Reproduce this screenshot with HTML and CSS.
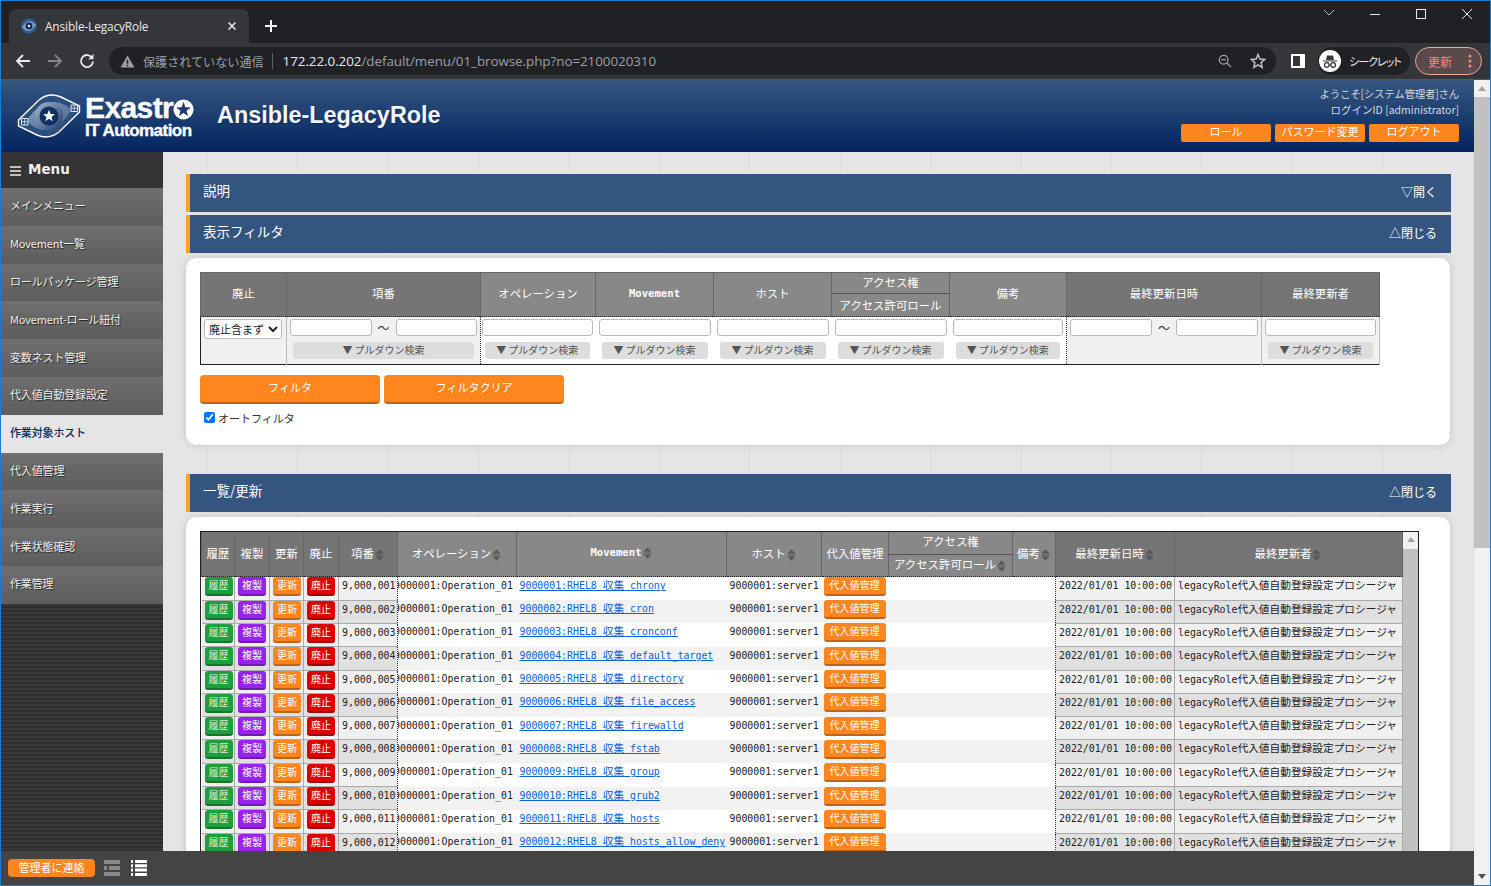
FILE: index.html
```html
<!DOCTYPE html>
<html lang="ja">
<head>
<meta charset="utf-8">
<title>Ansible-LegacyRole</title>
<link rel="stylesheet" href="styles.css">
</head>
<body>
<svg class="defs" width="0" height="0" aria-hidden="true">
  <symbol id="sort" viewBox="0 0 10 12"><path d="M5 0.5 L9 4.5 H1 Z M1 5.5 H9 V6.5 H1 Z M1 7.5 H9 L5 11.5 Z" fill="#555"/></symbol>
</svg>
<div class="window">
  <div class="tabstrip">
    <div class="tab">
      <svg class="favicon" viewBox="0 0 16 16"><circle cx="8" cy="8" r="7.8" fill="#2f5c8f"/><path d="M1 9 Q5 3 9 3 Q13 4 15 7 Q11 13 7 13 Q3 12 1 9 Z" fill="#7f9abb"/><circle cx="8" cy="8" r="3.4" fill="#12305c"/><circle cx="8" cy="8" r="1.2" fill="#fff"/></svg>
      <span class="tab-title">Ansible-LegacyRole</span>
      <svg class="tab-close" viewBox="0 0 10 10"><path d="M1.5 1.5 L8.5 8.5 M8.5 1.5 L1.5 8.5" stroke="#e8eaed" stroke-width="1.5"/></svg>
    </div>
    <svg class="newtab" viewBox="0 0 14 14"><path d="M7 1 V13 M1 7 H13" stroke="#fff" stroke-width="2"/></svg>
    <div class="winctl">
      <svg class="w-ic" viewBox="0 0 46 16"><path d="M18 4 L23 9 L28 4" fill="none" stroke="#bbb" stroke-width="1"/></svg>
      <svg class="w-ic" viewBox="0 0 46 16"><path d="M18 8.5 H28" stroke="#eee" stroke-width="1"/></svg>
      <svg class="w-ic" viewBox="0 0 46 16"><rect x="18.5" y="3.5" width="9" height="9" fill="none" stroke="#eee" stroke-width="1"/></svg>
      <svg class="w-ic" viewBox="0 0 46 16"><path d="M18 3 L28 13 M28 3 L18 13" stroke="#eee" stroke-width="1"/></svg>
    </div>
  </div>
  <div class="toolbar">
    <svg class="nav-ic" viewBox="0 0 16 16"><path d="M15 8 H2 M8 2 L2 8 L8 14" fill="none" stroke="#e8eaed" stroke-width="1.8"/></svg>
    <svg class="nav-ic" viewBox="0 0 16 16"><path d="M1 8 H14 M8 2 L14 8 L8 14" fill="none" stroke="#80868b" stroke-width="1.8"/></svg>
    <svg class="nav-ic" viewBox="0 0 16 16"><path d="M13.2 5 A6 6 0 1 0 14 8.5" fill="none" stroke="#e8eaed" stroke-width="1.8"/><path d="M14.5 1 V6.3 H9.2 Z" fill="#e8eaed"/></svg>
    <div class="omnibox">
      <svg class="warn" viewBox="0 0 16 14"><path d="M8 0.5 L15.5 13.5 H0.5 Z" fill="#9aa0a6"/><path d="M7.2 5 H8.8 V9.5 H7.2 Z M7.2 10.5 H8.8 V12 H7.2 Z" fill="#202124"/></svg>
      <span class="insecure">保護されていない通信</span>
      <span class="omni-sep"></span>
      <span class="url"><b class="host">172.22.0.202</b>/default/menu/01_browse.php?no=2100020310</span>
      <svg class="omni-zoom" viewBox="0 0 16 16"><circle cx="6.5" cy="6.5" r="5" fill="none" stroke="#9aa0a6" stroke-width="1.5"/><path d="M10.2 10.2 L15 15 M4 6.5 H9" stroke="#9aa0a6" stroke-width="1.5"/></svg>
      <svg class="omni-star" viewBox="0 0 16 16"><path d="M8 1.5 L9.9 6 L14.8 6.4 L11.1 9.6 L12.2 14.4 L8 11.9 L3.8 14.4 L4.9 9.6 L1.2 6.4 L6.1 6 Z" fill="none" stroke="#bdc1c6" stroke-width="1.5"/></svg>
    </div>
    <svg class="panel-ic" viewBox="0 0 14 14"><rect width="14" height="14" fill="#fff"/><rect x="2" y="2" width="7" height="10" fill="#35363a"/></svg>
    <div class="incog">
      <svg class="incog-ic" viewBox="0 0 22 22"><circle cx="11" cy="11" r="11" fill="#fff"/><path d="M4 10.5 H18 V11.5 H4 Z M7 10 L8 5.5 H14 L15 10 Z" fill="#35363a"/><circle cx="7.8" cy="15" r="2.3" fill="none" stroke="#35363a" stroke-width="1.2"/><circle cx="14.2" cy="15" r="2.3" fill="none" stroke="#35363a" stroke-width="1.2"/><path d="M10 15 H12" stroke="#35363a" stroke-width="1.2"/></svg>
      <span class="incog-label">シークレット</span>
    </div>
    <div class="update">
      <span class="update-label">更新</span>
      <svg class="update-dots" viewBox="0 0 4 14"><circle cx="2" cy="2" r="1.5" fill="#f28b82"/><circle cx="2" cy="7" r="1.5" fill="#f28b82"/><circle cx="2" cy="12" r="1.5" fill="#f28b82"/></svg>
    </div>
  </div>
  <div class="viewport">
    <div class="page">
      <header class="site-head">
        <div class="logo">
          <svg class="logo-mark" viewBox="0 0 64 46">
            <defs>
              <linearGradient id="ring" x1="0" y1="0" x2="1" y2="1"><stop offset="0" stop-color="#aab9cd"/><stop offset="1" stop-color="#1b3d6e"/></linearGradient>
              <linearGradient id="lens" x1="0" y1="0" x2="1" y2="1"><stop offset="0" stop-color="#8fa4c0"/><stop offset="1" stop-color="#3d5f8f"/></linearGradient>
            </defs>
            <path d="M1.5 27 L22 7 Q32 -1 44 4 L62.5 13 V19 L42 39 Q32 47 20 42 L1.5 33 Z" fill="#2d4f80" stroke="#fff" stroke-width="1.4"/>
            <path d="M10 27 Q22 9 38 9 Q50 11 54 17 Q44 36 26 37 Q15 35 10 27 Z" fill="url(#lens)"/>
            <circle cx="32" cy="23" r="14" fill="url(#ring)"/>
            <circle cx="32" cy="23" r="9.5" fill="#10305f"/>
            <path d="M32 16.8 L33.6 21 L38 21.2 L34.5 23.9 L35.7 28.2 L32 25.7 L28.3 28.2 L29.5 23.9 L26 21.2 L30.4 21 Z" fill="#fff"/>
            <path d="M4.5 25.5 H11 V32 H4.5 Z M54 12 H60.5 V18.5 H54 Z" fill="#2c4d7c" stroke="#dfe6ef" stroke-width="1"/>
            <path d="M7.7 25.5 V32 M4.5 28.7 H11 M57.2 12 V18.5 M54 15.2 H60.5" stroke="#dfe6ef" stroke-width="0.8"/>
          </svg>
          <div class="logo-text">
            <div class="logo-name">Exastr<svg class="logo-o" viewBox="0 0 22 22"><circle cx="11" cy="11" r="10.5" fill="#fff"/><path d="M11 3.2 L13 8.6 L18.8 8.8 L14.2 12.3 L15.8 17.9 L11 14.7 L6.2 17.9 L7.8 12.3 L3.2 8.8 L9 8.6 Z" fill="#1c3d6e"/></svg></div>
            <div class="logo-sub">IT Automation</div>
          </div>
        </div>
        <h1 class="page-title">Ansible-LegacyRole</h1>
        <div class="user-box">
          <div class="user-line welcome">ようこそ[システム管理者]さん</div>
          <div class="user-line">ログインID [administrator]</div>
          <div class="user-btns">
            <span class="head-btn">ロール</span>
            <span class="head-btn">パスワード変更</span>
            <span class="head-btn">ログアウト</span>
          </div>
        </div>
      </header>
      <div class="body-row">
        <nav class="sidebar">
          <div class="menu-head">
            <svg class="burger" viewBox="0 0 11 10"><path d="M0 1 H11 M0 5 H11 M0 9 H11" stroke="#eee" stroke-width="1.6"/></svg>
            <span>Menu</span>
          </div>
          <a class="menu-item">メインメニュー</a>
          <a class="menu-item">Movement一覧</a>
          <a class="menu-item">ロールパッケージ管理</a>
          <a class="menu-item">Movement-ロール紐付</a>
          <a class="menu-item">変数ネスト管理</a>
          <a class="menu-item">代入値自動登録設定</a>
          <a class="menu-item active">作業対象ホスト</a>
          <a class="menu-item">代入値管理</a>
          <a class="menu-item">作業実行</a>
          <a class="menu-item">作業状態確認</a>
          <a class="menu-item">作業管理</a>
          <div class="menu-rest"></div>
        </nav>
        <main class="content">
          <div class="bar bar-first"><span>説明</span><span class="bar-toggle">▽開く</span></div>
          <div class="bar bar-filter"><span>表示フィルタ</span><span class="bar-toggle">△閉じる</span></div>
          <section class="card filter-card">
            <table class="ftable">
              <colgroup><col class="fc1"><col class="fc2"><col class="fc3"><col class="fc4"><col class="fc5"><col class="fc6"><col class="fc7"><col class="fc8"><col class="fc9"></colgroup>
              <thead>
                <tr>
                  <th rowspan="2" class="dark">廃止</th>
                  <th rowspan="2" class="dark dotr">項番</th>
                  <th rowspan="2">オペレーション</th>
                  <th rowspan="2" class="mono">Movement</th>
                  <th rowspan="2">ホスト</th>
                  <th class="sub">アクセス権</th>
                  <th rowspan="2" class="dotr">備考</th>
                  <th rowspan="2" class="dark">最終更新日時</th>
                  <th rowspan="2" class="dark">最終更新者</th>
                </tr>
                <tr><th class="sub">アクセス許可ロール</th></tr>
              </thead>
              <tbody>
                <tr>
                  <td class="fixed"><select class="sel"><option>廃止含まず</option></select></td>
                  <td class="fixed dotr"><div class="range"><span class="inp"></span><span class="tilde">～</span><span class="inp"></span></div><div class="pull">▼ プルダウン検索</div></td>
                  <td class="tight"><span class="inp"></span><div class="pull">▼ プルダウン検索</div></td>
                  <td><span class="inp"></span><div class="pull">▼ プルダウン検索</div></td>
                  <td><span class="inp"></span><div class="pull">▼ プルダウン検索</div></td>
                  <td><span class="inp"></span><div class="pull">▼ プルダウン検索</div></td>
                  <td class="dotr"><span class="inp"></span><div class="pull">▼ プルダウン検索</div></td>
                  <td class="fixed"><div class="range"><span class="inp"></span><span class="tilde">～</span><span class="inp"></span></div></td>
                  <td class="fixed"><span class="inp"></span><div class="pull">▼ プルダウン検索</div></td>
                </tr>
              </tbody>
            </table>
            <div class="filter-actions">
              <span class="act-btn">フィルタ</span>
              <span class="act-btn">フィルタクリア</span>
            </div>
            <label class="auto"><input type="checkbox" class="auto-check" checked>オートフィルタ</label>
          </section>
          <div class="bar bar-list"><span>一覧/更新</span><span class="bar-toggle">△閉じる</span></div>
          <section class="card list-card">
            <div class="list-wrap">
              <table class="ltable">
                <colgroup><col class="lc1"><col class="lc2"><col class="lc3"><col class="lc4"><col class="lc5"><col class="lc6"><col class="lc7"><col class="lc8"><col class="lc9"><col class="lc10"><col class="lc11"><col class="lc12"><col class="lc13"></colgroup>
                <thead>
                  <tr>
                    <th rowspan="2" class="dark">履歴</th>
                    <th rowspan="2" class="dark">複製</th>
                    <th rowspan="2" class="dark">更新</th>
                    <th rowspan="2" class="dark">廃止</th>
                    <th rowspan="2" class="dark dotr">項番<svg class="sorti"><use href="#sort"/></svg></th>
                    <th rowspan="2">オペレーション<svg class="sorti"><use href="#sort"/></svg></th>
                    <th rowspan="2" class="mono">Movement<svg class="sorti"><use href="#sort"/></svg></th>
                    <th rowspan="2">ホスト<svg class="sorti"><use href="#sort"/></svg></th>
                    <th rowspan="2">代入値管理</th>
                    <th class="sub">アクセス権</th>
                    <th rowspan="2" class="dotr">備考<svg class="sorti"><use href="#sort"/></svg></th>
                    <th rowspan="2" class="dark">最終更新日時<svg class="sorti"><use href="#sort"/></svg></th>
                    <th rowspan="2" class="dark">最終更新者<svg class="sorti"><use href="#sort"/></svg></th>
                  </tr>
                  <tr><th class="sub">アクセス許可ロール<svg class="sorti"><use href="#sort"/></svg></th></tr>
                </thead>
                <tbody>
                  <tr><td class="fx"><span class="b g">履歴</span></td><td class="fx"><span class="b p">複製</span></td><td class="fx"><span class="b o">更新</span></td><td class="fx"><span class="b r">廃止</span></td><td class="fx num dotr">9,000,001</td><td class="op"><span class="opt">9000001:Operation_01</span></td><td><a class="lnk">9000001:RHEL8 <span class="ja">収集</span> chrony</a></td><td>9000001:server1</td><td><span class="b o wide">代入値管理</span></td><td></td><td class="dotr"></td><td class="fx num">2022/01/01 10:00:00</td><td class="fx who">legacyRole<span class="ja">代入値自動登録設定プロシージャ</span></td></tr>
                  <tr><td class="fx"><span class="b g">履歴</span></td><td class="fx"><span class="b p">複製</span></td><td class="fx"><span class="b o">更新</span></td><td class="fx"><span class="b r">廃止</span></td><td class="fx num dotr">9,000,002</td><td class="op"><span class="opt">9000001:Operation_01</span></td><td><a class="lnk">9000002:RHEL8 <span class="ja">収集</span> cron</a></td><td>9000001:server1</td><td><span class="b o wide">代入値管理</span></td><td></td><td class="dotr"></td><td class="fx num">2022/01/01 10:00:00</td><td class="fx who">legacyRole<span class="ja">代入値自動登録設定プロシージャ</span></td></tr>
                  <tr><td class="fx"><span class="b g">履歴</span></td><td class="fx"><span class="b p">複製</span></td><td class="fx"><span class="b o">更新</span></td><td class="fx"><span class="b r">廃止</span></td><td class="fx num dotr">9,000,003</td><td class="op"><span class="opt">9000001:Operation_01</span></td><td><a class="lnk">9000003:RHEL8 <span class="ja">収集</span> cronconf</a></td><td>9000001:server1</td><td><span class="b o wide">代入値管理</span></td><td></td><td class="dotr"></td><td class="fx num">2022/01/01 10:00:00</td><td class="fx who">legacyRole<span class="ja">代入値自動登録設定プロシージャ</span></td></tr>
                  <tr><td class="fx"><span class="b g">履歴</span></td><td class="fx"><span class="b p">複製</span></td><td class="fx"><span class="b o">更新</span></td><td class="fx"><span class="b r">廃止</span></td><td class="fx num dotr">9,000,004</td><td class="op"><span class="opt">9000001:Operation_01</span></td><td><a class="lnk">9000004:RHEL8 <span class="ja">収集</span> default_target</a></td><td>9000001:server1</td><td><span class="b o wide">代入値管理</span></td><td></td><td class="dotr"></td><td class="fx num">2022/01/01 10:00:00</td><td class="fx who">legacyRole<span class="ja">代入値自動登録設定プロシージャ</span></td></tr>
                  <tr><td class="fx"><span class="b g">履歴</span></td><td class="fx"><span class="b p">複製</span></td><td class="fx"><span class="b o">更新</span></td><td class="fx"><span class="b r">廃止</span></td><td class="fx num dotr">9,000,005</td><td class="op"><span class="opt">9000001:Operation_01</span></td><td><a class="lnk">9000005:RHEL8 <span class="ja">収集</span> directory</a></td><td>9000001:server1</td><td><span class="b o wide">代入値管理</span></td><td></td><td class="dotr"></td><td class="fx num">2022/01/01 10:00:00</td><td class="fx who">legacyRole<span class="ja">代入値自動登録設定プロシージャ</span></td></tr>
                  <tr><td class="fx"><span class="b g">履歴</span></td><td class="fx"><span class="b p">複製</span></td><td class="fx"><span class="b o">更新</span></td><td class="fx"><span class="b r">廃止</span></td><td class="fx num dotr">9,000,006</td><td class="op"><span class="opt">9000001:Operation_01</span></td><td><a class="lnk">9000006:RHEL8 <span class="ja">収集</span> file_access</a></td><td>9000001:server1</td><td><span class="b o wide">代入値管理</span></td><td></td><td class="dotr"></td><td class="fx num">2022/01/01 10:00:00</td><td class="fx who">legacyRole<span class="ja">代入値自動登録設定プロシージャ</span></td></tr>
                  <tr><td class="fx"><span class="b g">履歴</span></td><td class="fx"><span class="b p">複製</span></td><td class="fx"><span class="b o">更新</span></td><td class="fx"><span class="b r">廃止</span></td><td class="fx num dotr">9,000,007</td><td class="op"><span class="opt">9000001:Operation_01</span></td><td><a class="lnk">9000007:RHEL8 <span class="ja">収集</span> firewalld</a></td><td>9000001:server1</td><td><span class="b o wide">代入値管理</span></td><td></td><td class="dotr"></td><td class="fx num">2022/01/01 10:00:00</td><td class="fx who">legacyRole<span class="ja">代入値自動登録設定プロシージャ</span></td></tr>
                  <tr><td class="fx"><span class="b g">履歴</span></td><td class="fx"><span class="b p">複製</span></td><td class="fx"><span class="b o">更新</span></td><td class="fx"><span class="b r">廃止</span></td><td class="fx num dotr">9,000,008</td><td class="op"><span class="opt">9000001:Operation_01</span></td><td><a class="lnk">9000008:RHEL8 <span class="ja">収集</span> fstab</a></td><td>9000001:server1</td><td><span class="b o wide">代入値管理</span></td><td></td><td class="dotr"></td><td class="fx num">2022/01/01 10:00:00</td><td class="fx who">legacyRole<span class="ja">代入値自動登録設定プロシージャ</span></td></tr>
                  <tr><td class="fx"><span class="b g">履歴</span></td><td class="fx"><span class="b p">複製</span></td><td class="fx"><span class="b o">更新</span></td><td class="fx"><span class="b r">廃止</span></td><td class="fx num dotr">9,000,009</td><td class="op"><span class="opt">9000001:Operation_01</span></td><td><a class="lnk">9000009:RHEL8 <span class="ja">収集</span> group</a></td><td>9000001:server1</td><td><span class="b o wide">代入値管理</span></td><td></td><td class="dotr"></td><td class="fx num">2022/01/01 10:00:00</td><td class="fx who">legacyRole<span class="ja">代入値自動登録設定プロシージャ</span></td></tr>
                  <tr><td class="fx"><span class="b g">履歴</span></td><td class="fx"><span class="b p">複製</span></td><td class="fx"><span class="b o">更新</span></td><td class="fx"><span class="b r">廃止</span></td><td class="fx num dotr">9,000,010</td><td class="op"><span class="opt">9000001:Operation_01</span></td><td><a class="lnk">9000010:RHEL8 <span class="ja">収集</span> grub2</a></td><td>9000001:server1</td><td><span class="b o wide">代入値管理</span></td><td></td><td class="dotr"></td><td class="fx num">2022/01/01 10:00:00</td><td class="fx who">legacyRole<span class="ja">代入値自動登録設定プロシージャ</span></td></tr>
                  <tr><td class="fx"><span class="b g">履歴</span></td><td class="fx"><span class="b p">複製</span></td><td class="fx"><span class="b o">更新</span></td><td class="fx"><span class="b r">廃止</span></td><td class="fx num dotr">9,000,011</td><td class="op"><span class="opt">9000001:Operation_01</span></td><td><a class="lnk">9000011:RHEL8 <span class="ja">収集</span> hosts</a></td><td>9000001:server1</td><td><span class="b o wide">代入値管理</span></td><td></td><td class="dotr"></td><td class="fx num">2022/01/01 10:00:00</td><td class="fx who">legacyRole<span class="ja">代入値自動登録設定プロシージャ</span></td></tr>
                  <tr><td class="fx"><span class="b g">履歴</span></td><td class="fx"><span class="b p">複製</span></td><td class="fx"><span class="b o">更新</span></td><td class="fx"><span class="b r">廃止</span></td><td class="fx num dotr">9,000,012</td><td class="op"><span class="opt">9000001:Operation_01</span></td><td><a class="lnk">9000012:RHEL8 <span class="ja">収集</span> hosts_allow_deny</a></td><td>9000001:server1</td><td><span class="b o wide">代入値管理</span></td><td></td><td class="dotr"></td><td class="fx num">2022/01/01 10:00:00</td><td class="fx who">legacyRole<span class="ja">代入値自動登録設定プロシージャ</span></td></tr>
                </tbody>
              </table>
              <div class="inner-scroll"><div class="inner-up"></div><div class="inner-thumb"></div></div>
            </div>
          </section>
        </main>
      </div>
      <footer class="site-foot">
        <span class="contact">管理者に連絡</span>
        <svg class="foot-ic" viewBox="0 0 16 16"><path d="M0 0 H16 V4 H0 Z M0 6 H3 V10 H0 Z M5 6 H16 V10 H5 Z M0 12 H16 V16 H0 Z" fill="#888"/></svg>
        <svg class="foot-ic" viewBox="0 0 16 16"><path d="M0 0 H2 V3 H0 Z M4 0 H16 V3 H4 Z M0 4.3 H2 V7.3 H0 Z M4 4.3 H16 V7.3 H4 Z M0 8.6 H2 V11.6 H0 Z M4 8.6 H16 V11.6 H4 Z M0 13 H2 V16 H0 Z M4 13 H16 V16 H4 Z" fill="#fff"/></svg>
      </footer>
    </div>
    <div class="page-scroll">
      <div class="arrow-up"></div>
      <div class="page-thumb"></div>
      <div class="arrow-down"></div>
    </div>
  </div>
</div>
</body>
</html>
```
FILE: styles.css
```css
* { box-sizing: border-box; }
html, body { margin: 0; padding: 0; height: 100%; overflow: hidden; }
body { font-family: "Noto Sans CJK JP", "Noto Sans", sans-serif; font-size: 12px; color: #222; background: #202124; }
.defs { position: absolute; }

.window { height: 886px; display: flex; flex-direction: column; border: 1px solid #1a7fd0; overflow: hidden; }

/* browser chrome */
.tabstrip { height: 42px; flex: none; background: #202124; display: flex; align-items: flex-end; padding-left: 8px; }
.tab { width: 240px; height: 34px; background: #35363a; border-radius: 8px 8px 0 0; display: flex; align-items: center; padding: 0 12px; }
.favicon { width: 16px; height: 16px; flex: none; }
.tab-title { margin-left: 8px; font-family: "Open Sans", sans-serif; font-size: 11.8px; color: #e8eaed; letter-spacing: -0.1px; flex: 1; }
.tab-close { width: 10px; height: 10px; flex: none; margin-right: 0; }
.newtab { width: 14px; height: 14px; margin: 0 0 10px 15px; }
.winctl { margin-left: auto; align-self: flex-start; display: flex; padding-top: 5px; }
.w-ic { width: 46px; height: 16px; display: block; }

.toolbar { height: 37px; flex: none; background: #35363a; display: flex; align-items: center; padding: 0 8px 0 14px; border-bottom: 1px solid #555; }
.nav-ic { width: 16px; height: 16px; flex: none; margin-right: 16px; }
.omnibox { width: 1167px; height: 28px; margin-left: -2px; flex: none; background: #202124; border-radius: 14px; display: flex; align-items: center; padding-left: 11px; }
.warn { width: 15px; height: 13px; flex: none; }
.insecure { margin-left: 8px; font-size: 12.1px; color: #9aa0a6; white-space: nowrap; }
.omni-sep { width: 1px; height: 16px; background: #5f6368; margin: 0 10px 0 8px; }
.url { font-family: "Open Sans", sans-serif; font-size: 13.4px; color: #9aa0a6; white-space: nowrap; flex: 1; letter-spacing: -0.05px; }
.host { font-weight: 400; color: #e8eaed; }
.omni-zoom { width: 14px; height: 14px; margin-right: 18px; flex: none; }
.omni-star { width: 16px; height: 16px; margin-right: 10px; flex: none; }
.panel-ic { width: 14px; height: 14px; margin-left: 15px; flex: none; }
.incog { width: 92px; height: 28px; margin-left: 13px; background: #202124; border-radius: 14px; display: flex; align-items: center; padding-left: 1px; flex: none; }
.incog-ic { width: 22px; height: 22px; flex: none; }
.incog-label { margin-left: 8px; font-size: 11px; color: #e8eaed; font-feature-settings: "palt"; letter-spacing: -0.95px; white-space: nowrap; }
.update { width: 67px; height: 28px; margin-left: 5px; border: 1px solid #e8a59a; border-radius: 14px; background: #5a4a4b; display: flex; align-items: center; padding-left: 12px; flex: none; }
.update-label { font-size: 12px; color: #f28b82; }
.update-dots { width: 4px; height: 14px; margin-left: 16px; }

/* page frame */
.viewport { flex: 1; min-height: 0; display: flex; }
.page { flex: 1; min-width: 0; display: flex; flex-direction: column; }

.site-head { height: 72px; flex: none; background: linear-gradient(#36577f, #032460); display: flex; align-items: flex-start; padding: 0 15px 0 16px; color: #fff; }
.logo { display: flex; align-items: flex-start; padding-top: 13px; width: 200px; flex: none; }
.logo-mark { width: 64px; height: 46px; flex: none; }
.logo-text { margin-left: 4px; font-family: "Liberation Sans", sans-serif; font-weight: 700; color: #fff; -webkit-text-stroke: 0.35px #fff; }
.logo-name { font-size: 30px; line-height: 27px; letter-spacing: -0.6px; display: flex; align-items: center; margin-top: 1px; }
.logo-o { width: 21px; height: 21px; margin-left: 0; flex: none; margin-top: 3px; }
.logo-sub { font-size: 17px; line-height: 17px; letter-spacing: -0.55px; margin-top: 1px; }
.page-title { margin: 20px 0 0 0; font-family: "Liberation Sans", sans-serif; font-weight: 700; font-size: 23.4px; line-height: 30px; color: #f2f5fb; text-shadow: 1px 1px 1px #0b2a5c; }
.user-box { margin-left: auto; display: flex; flex-direction: column; align-items: flex-end; padding-top: 6px; }
.user-line { font-size: 10.5px; line-height: 16px; color: #cfd8e6; white-space: nowrap; }
.welcome { letter-spacing: -0.25px; }
.user-btns { display: flex; gap: 4px; margin-top: 6px; }
.head-btn { width: 90px; height: 18px; background: #ff851f; border-radius: 2px; text-align: center; font-size: 11px; line-height: 14px; color: #fff; }

.body-row { flex: 1; min-height: 0; display: flex; }

.sidebar { width: 162px; flex: none; display: flex; flex-direction: column; background: #333; }
.menu-head { height: 36px; flex: none; background: #333; display: flex; align-items: center; padding: 0 0 3px 9px; font-family: "DejaVu Sans", sans-serif; font-weight: 700; font-size: 13.5px; color: #eee; }
.burger { width: 11px; height: 10px; margin: 5px 7px 0 0; }
.menu-item { height: 37.8px; flex: none; display: flex; align-items: center; padding-left: 9px; padding-bottom: 3px; background: linear-gradient(#6f6f6f, #5d5d5d); color: #eee; font-size: 11px; text-shadow: 1px 1px 1px #222; white-space: nowrap; letter-spacing: -0.15px; }
.menu-item.active { background: #e5e5e5; color: #0a2a5c; text-shadow: none; font-weight: 500; }
.menu-rest { flex: 1; background: repeating-linear-gradient(#383838 0 2px, #2e2e2e 2px 4px); }

.content { flex: 1; min-width: 0; overflow: hidden; padding: 22px 23px 0; background-color: #e5e5e5; background-image: repeating-linear-gradient(90deg, transparent 0 44px, #dcdcdc 44px 45px, transparent 45px 90.4px); display: flex; flex-direction: column; }

.bar { height: 38px; flex: none; background: #34557f; border-left: 4px solid #f9a02d; display: flex; align-items: center; justify-content: space-between; padding: 0 14px 6px 13px; color: #fff; font-size: 13.5px; }
.bar-filter { margin-top: 3px; }
.bar-list { margin-top: 29px; }
.bar-toggle { font-size: 12px; margin-top: 2px; }

.card { background: #fff; border-radius: 10px; padding: 14px; box-shadow: 0 0 8px rgba(0,0,0,.14); flex: none; width: 1264px; }
.filter-card { margin-top: 5px; height: 187px; }
.list-card { margin-top: 5px; }

/* filter table */
.ftable { width: 1179px; table-layout: fixed; border-collapse: collapse; border: 1px solid #222; }
.fc1 { width: 86px; } .fc2 { width: 194px; } .fc3 { width: 115px; } .fc4 { width: 118px; } .fc5 { width: 118px; } .fc6 { width: 118px; } .fc7 { width: 117px; } .fc8 { width: 195px; } .fc9 { width: 118px; }
.ftable th { background: #888; color: #fff; font-weight: 400; font-size: 11.4px; border: 1px solid #666; border-bottom: 1px dotted #222; height: 21px; padding: 0 0 4px; }
.ftable th.dark, .ltable th.dark { background: #757575; }
.ftable th.mono, .ltable th.mono { font-family: "DejaVu Sans Mono", monospace; font-size: 10.6px; font-weight: 700; }
.ftable th.dotr, .ftable td.dotr, .ltable th.dotr, .ltable td.dotr { border-right: 1px dotted #333; }
.ftable th.sub { border-bottom: 1px solid #555; padding-bottom: 2px; }
.ftable tr + tr th.sub { border-bottom: 1px dotted #222; height: 23px; padding-bottom: 0; }
.ftable td { height: 48px; vertical-align: top; padding: 2px 3px 0; background: #fff; }
.ftable td.tight { padding-left: 1px; }
.ftable td.fixed { background: #f0f0f0; border-right: 1px solid #bbb; }
.ftable td.fixed.dotr { border-right: 1px dotted #333; }
.inp { display: block; height: 17px; background: #fff; border: 1px solid #bbb; border-radius: 3px; flex: 1; }
.range { display: flex; align-items: center; }
.tilde { width: 24px; text-align: center; font-size: 12px; line-height: 17px; color: #333; flex: none; }
.pull { height: 17px; margin: 6px 3px 0; background: #ddd; border-radius: 3px; color: #555; font-size: 10px; line-height: 15px; text-align: center; }
.sel { display: block; width: 78px; height: 20px; font-family: "Noto Sans CJK JP", sans-serif; font-size: 11px; color: #222; background: #fff; border: 1px solid #bbb; border-radius: 3px; padding: 0; }
.filter-actions { display: flex; gap: 4px; margin-top: 10px; }
.act-btn { width: 180px; height: 29px; background: #ff851f; border-bottom: 2px solid #bd6313; border-radius: 4px; color: #fff; text-align: center; font-size: 11px; line-height: 25px; }
.auto { display: flex; align-items: center; margin: 7px 0 0 4px; font-size: 11px; line-height: 15px; color: #333; }
.auto-check { width: 11px; height: 11px; margin: 0 3px 2px 0; }

/* list table */
.list-wrap { display: flex; width: 1219px; border: 1px solid #222; }
.ltable { width: 1201px; flex: none; table-layout: fixed; border-collapse: collapse; align-self: flex-start; }
.lc1 { width: 33px; } .lc2 { width: 35px; } .lc3 { width: 34px; } .lc4 { width: 35px; } .lc5 { width: 59px; } .lc6 { width: 119px; } .lc7 { width: 210px; } .lc8 { width: 95px; } .lc9 { width: 67px; } .lc10 { width: 124px; } .lc11 { width: 43px; } .lc12 { width: 119px; } .lc13 { width: 228px; }
.ltable th { background: #888; color: #fff; font-weight: 400; font-size: 11.4px; border: 1px solid #666; border-top: 0; border-bottom: 1px dotted #222; height: 22px; padding: 0 0 3px; white-space: nowrap; }
.ltable th.sub { border-bottom: 1px solid #555; }
.ltable tr + tr th.sub { border-bottom: 1px dotted #222; height: 22.7px; }
.sorti { width: 11px; height: 12px; vertical-align: -3px; }
.ltable tbody tr { height: 23.33px; }
.ltable td { padding: 0 3px; vertical-align: top; font-family: "DejaVu Sans Mono", "Noto Sans CJK JP", monospace; font-size: 9.9px; line-height: 17px; color: #222; white-space: nowrap; overflow: hidden; background: #fff; }
.ltable tbody tr:nth-child(even) td { background: #f2f2f2; }
.ltable td.fx { background: #f0f0f0; border-right: 1px solid #aaa; border-bottom: 1px solid #aaa; }
.ltable tbody tr:nth-child(even) td.fx { background: #e0e0e0; }
.ltable td.fx.num { text-align: right; padding-right: 4px; }
.ltable td.fx.dotr { border-right: 1px dotted #333; }
.ltable td.op { padding: 0; }
.opt { display: block; margin-left: -4px; }
.ja { font-family: "Noto Sans CJK JP", sans-serif; font-size: 10.7px; line-height: 1; }
.lnk { color: #0a62d8; text-decoration: underline; }
.b { display: block; width: 28px; height: 19px; margin-top: 0; border-radius: 3px; font-family: "Noto Sans CJK JP", sans-serif; font-size: 10px; line-height: 16px; text-align: center; color: #fff; border-bottom: 2px solid rgba(0,0,0,.25); }
.b.g { background: #1e9e3e; color: #d5efd9; }
.b.p { background: #9922ee; }
.b.o { background: #ff851f; }
.b.r { background: #dd0000; }
.b.wide { width: 62px; margin-left: -1px; }
.inner-scroll { flex: 1; display: flex; flex-direction: column; background: #f1f1f1; }
.inner-up { height: 17px; flex: none; position: relative; }
.inner-up::before { content: ""; position: absolute; left: 4px; top: 5px; border: 4px solid transparent; border-top: 0; border-bottom: 5px solid #a3a3a3; }
.inner-thumb { flex: 1; background: #c1c1c1; }

/* footer */
.site-foot { height: 34px; flex: none; background: #444; display: flex; align-items: center; padding-left: 7px; }
.contact { width: 87px; height: 18px; background: #ff851f; border-radius: 4px; color: #fff; text-align: center; font-size: 11px; line-height: 16px; }
.foot-ic { width: 16px; height: 16px; margin-left: 9px; }
.foot-ic + .foot-ic { margin-left: 11px; }

/* page scrollbar */
.page-scroll { width: 16px; flex: none; background: #f1f1f1; display: flex; flex-direction: column; }
.arrow-up, .arrow-down { height: 17px; flex: none; position: relative; }
.arrow-up::before { content: ""; position: absolute; left: 4px; top: 6px; border: 4px solid transparent; border-top: 0; border-bottom: 5px solid #a3a3a3; }
.arrow-down::before { content: ""; position: absolute; left: 4px; top: 6px; border: 4px solid transparent; border-bottom: 0; border-top: 5px solid #505050; }
.page-thumb { height: 451px; flex: none; background: #c1c1c1; margin-bottom: auto; }
```
